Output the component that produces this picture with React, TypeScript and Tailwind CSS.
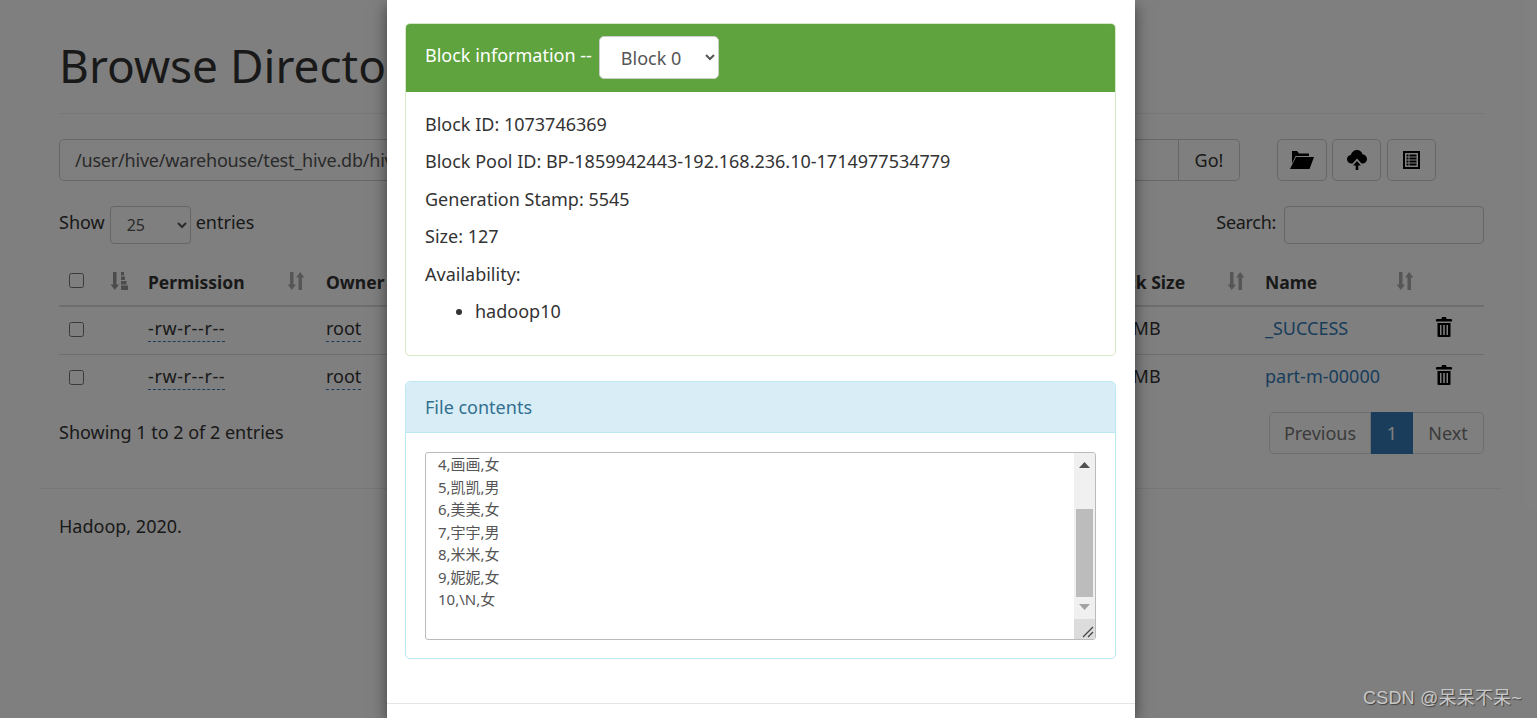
function SortBoth() {
  return (
    <svg width="18" height="20" viewBox="0 0 18 20" className="fill-[#333] opacity-40 shrink-0 -mt-[3px]">
      <path d="M3 1h3.500v12.500H9L4.800 19 .6 13.500H3z" />
      <path d="M11.500 19V6.500H9L13.200 1l4.200 5.500H15V19z" />
    </svg>
  )
}

function SortAttrs() {
  return (
    <svg width="18" height="20" viewBox="0 0 18 20" className="fill-[#333] opacity-50 shrink-0 -mt-[3px]">
      <path d="M3 1h3.500v12.500H9L4.800 19 .6 13.500H3z" />
      <path d="M11 1h3v3.500h-3zM11 5.500h4v3.500h-4zM11 10h5.500v3.500H11zM11 14.500h7V19h-7z" />
    </svg>
  )
}

function Trash() {
  return (
    <svg width="16" height="20" viewBox="0 0 16 20" className="fill-[#000]">
      <path d="M6 0h4l.6 2H15a1 1 0 0 1 1 1v1.500H0V3a1 1 0 0 1 1-1h4.400z" />
      <path fillRule="evenodd" d="M1.500 6h13v13a1 1 0 0 1-1 1h-11a1 1 0 0 1-1-1zM4 8v10h1.500V8zm3.200 0v10h1.600V8zm3.300 0v10H12V8z" />
    </svg>
  )
}

function FolderOpen() {
  return (
    <svg width="24" height="18" viewBox="0 0 24 18" className="fill-[#000]">
      <path d="M2 0h5l2 2.500h10V5H5.500L2 12.500z" />
      <path d="M6 6h18l-4.500 12H0z" />
    </svg>
  )
}

function CloudUpload() {
  return (
    <svg width="20" height="20" viewBox="0 0 20 20" className="fill-[#000]">
      <path d="M10 0c2.700 0 4.900 1.800 5.500 4.300C18 4.500 20 6.500 20 9c0 2.700-2 4.500-4.500 4.500h-1L10 8.500l-4.500 5h-1C2 13.500 0 11.700 0 9.200 0 7 1.600 5.200 3.800 5 4.500 2.100 7 0 10 0z" />
      <path d="M10 11l4 4.500h-2.700V20H8.700v-4.500H6z" />
    </svg>
  )
}

function ListAlt() {
  return (
    <svg width="17" height="18" viewBox="0 0 17 18" className="fill-[#000]">
      <path fillRule="evenodd" d="M0 0h17v18H0zM2 2v14h13V2z" />
      <path d="M3.500 3.500h2v2h-2zM6.500 3.500h7v2h-7zM3.500 6.500h2v2h-2zM6.500 6.500h7v2h-7zM3.500 9.500h2v2h-2zM6.500 9.500h7v2h-7zM3.500 12.500h2v2h-2zM6.500 12.500h7v2h-7z" />
    </svg>
  )
}

function Row({ name }: { name: string }) {
  return (
    <tr className="border-b border-[#ddd] last:border-b-0 h-[48px]">
      <td className="pl-[10px] pb-[2px]"><input type="checkbox" className="w-[15px] h-[15px] block" /></td>
      <td></td>
      <td className="pl-[10px] pb-[4px]"><span className="tracking-[0.6px] pb-[1px] border-b border-dashed border-[#337ab7]">-rw-r--r--</span></td>
      <td className="pl-[9px] pb-[4px]"><span className="pb-[1px] border-b border-dashed border-[#337ab7]">root</span></td>
      <td className="pl-[2px] pb-[4px]">128 MB</td>
      <td className="pl-[9px] pb-[4px] text-[#337ab7]">{name}</td>
      <td className="pl-[9px] pb-[6px]"><Trash /></td>
    </tr>
  )
}

export default function App() {
  return (
    <div className="relative h-[718px] overflow-hidden bg-white font-['Noto_Sans','Noto_Sans_CJK_SC',sans-serif] text-[18px] leading-[25px] text-[#333]">
      <div className="pl-[59px] pr-[53px] pt-[34px]">
        <h1 className="text-[46px] leading-[62px] text-[#333] pb-[17px] border-b border-[#eee]">Browse Directory</h1>

        <div className="flex mt-[25px] h-[42px]">
          <input defaultValue="/user/hive/warehouse/test_hive.db/hive_table" className="w-[1120px] border border-[#ccc] rounded-l-[5px] px-[15px] text-[#555] tracking-[-0.2px]" />
          <button className="w-[61px] border border-l-0 border-[#ccc] rounded-r-[5px]">Go!</button>
          <button className="w-[50px] ml-[37px] border border-[#ccc] rounded-[5px] flex items-center justify-center"><FolderOpen /></button>
          <button className="w-[49px] ml-[5px] border border-[#ccc] rounded-[5px] flex items-center justify-center"><CloudUpload /></button>
          <button className="w-[49px] ml-[6px] border border-[#ccc] rounded-[5px] flex items-center justify-center"><ListAlt /></button>
        </div>

        <div className="flex items-center justify-between mt-[25px] h-[38px]">
          <div className="flex items-center">
            <span className="-mt-[6px]">Show</span>
            <select className="w-[81px] h-[38px] mx-[5px] pl-[12px] border border-[#ccc] rounded-[4px] bg-white text-[16px] text-[#555]"><option>25</option></select>
            <span className="-mt-[6px]">entries</span>
          </div>
          <div className="flex items-center">
            <span className="-mt-[6px] tracking-[-0.3px]">Search:</span>
            <input className="w-[200px] h-[38px] ml-[8px] border border-[#ccc] rounded-[4px]" />
          </div>
        </div>

        <table className="table-fixed w-[1425px] mt-[18px]">
          <colgroup>
            <col className="w-[41px]" />
            <col className="w-[38px]" />
            <col className="w-[179px]" />
            <col className="w-[778px]" />
            <col className="w-[161px]" />
            <col className="w-[171px]" />
            <col className="w-[57px]" />
          </colgroup>
          <thead>
            <tr className="border-b-2 border-[#ddd] h-[44px] font-bold text-[17.500px]">
              <th className="pl-[10px] pb-[7px]"><input type="checkbox" className="w-[15px] h-[15px] block" /></th>
              <th className="pl-[10px] pb-[3px]"><SortAttrs /></th>
              <th className="pl-[10px] pr-[12px] pb-[3px]"><div className="flex items-center justify-between">Permission<SortBoth /></div></th>
              <th className="pl-[9px] pb-[3px] text-left">Owner</th>
              <th className="pl-[4px] pr-[11px] pb-[3px]"><div className="flex items-center justify-between">Block Size<SortBoth /></div></th>
              <th className="pl-[9px] pr-[13px] pb-[3px]"><div className="flex items-center justify-between">Name<SortBoth /></div></th>
              <th></th>
            </tr>
          </thead>
          <tbody>
            <Row name="_SUCCESS" />
            <Row name="part-m-00000" />
          </tbody>
        </table>

        <div className="flex items-start justify-between mt-[10px]">
          <div className="mt-[8px]">Showing 1 to 2 of 2 entries</div>
          <div className="flex h-[42px] text-[#777]">
            <span className="w-[102px] border border-[#ddd] rounded-l-[5px] flex items-center justify-center">Previous</span>
            <span className="w-[42px] bg-[#337ab7] text-white flex items-center justify-center">1</span>
            <span className="w-[71px] border border-l-0 border-[#ddd] rounded-r-[5px] flex items-center justify-center">Next</span>
          </div>
        </div>
      </div>

      <div className="border-t border-[#eee] mt-[34px] ml-[40px] mr-[35px] pl-[19px] pt-[25px]">Hadoop, 2020.</div>

      <div className="absolute inset-0 bg-black/50"></div>

      <div className="absolute left-[387px] top-0 h-[718px] w-[748px] bg-white shadow-[0_5px_15px_rgba(0,0,0,0.5)] px-[18px] pt-[23px]">
        <div className="w-[711px] border border-[#d6e9c6] rounded-[5px]">
          <div className="h-[68px] bg-[#5fa33e] text-white flex items-center px-[19px] rounded-t-[4px]">
            <span className="-mt-[6px]">Block information --</span>
            <select className="w-[120px] h-[43px] -mt-[1px] ml-[7px] pl-[17px] rounded-[5px] bg-white text-[#555] border border-[#ccc]"><option>Block 0</option></select>
          </div>
          <div className="px-[19px] pt-[19.500px] pb-[18.500px]">
            <p className="mb-[12.500px]">Block ID: 1073746369</p>
            <p className="mb-[12.500px]">Block Pool ID: BP-1859942443-192.168.236.10-1714977534779</p>
            <p className="mb-[12.500px]">Generation Stamp: 5545</p>
            <p className="mb-[12.500px]">Size: 127</p>
            <p className="mb-[12.500px]">Availability:</p>
            <ul className="list-disc pl-[50px] mb-[12.500px]"><li>hadoop10</li></ul>
          </div>
        </div>

        <div className="w-[711px] mt-[25px] border border-[#bce8f1] rounded-[5px]">
          <div className="h-[51px] bg-[#d9edf7] text-[#31708f] flex items-center px-[19px] rounded-t-[4px] border-b border-[#bce8f1]">File contents</div>
          <div className="px-[19px] pt-[19px] pb-[18px]">
            <div className="h-[188px] border border-[#bbb] rounded-[3px] flex overflow-hidden text-[15px] leading-[22.500px] text-[#555]">
              <div className="flex-1 pl-[12px]">
                <div>4,画画,女</div>
                <div>5,凯凯,男</div>
                <div>6,美美,女</div>
                <div>7,宇宇,男</div>
                <div>8,米米,女</div>
                <div>9,妮妮,女</div>
                <div>10,\N,女</div>
              </div>
              <div className="w-[21px] bg-[#f0f0f0] flex flex-col items-center">
                <svg width="11" height="6" viewBox="0 0 11 6" className="mt-[9px] fill-[#505050]"><path d="M5.500 0 11 6H0z" /></svg>
                <div className="w-[17px] h-[88px] mt-[41px] bg-[#bcbcbc]"></div>
                <svg width="11" height="6" viewBox="0 0 11 6" className="mt-[7px] fill-[#a3a3a3]"><path d="M0 0h11L5.500 6z" /></svg>
                <div className="mt-[9px] w-full flex-1 bg-[#dcdcdc] flex items-end justify-end">
                  <svg width="12" height="12" viewBox="0 0 12 12" className="stroke-[#444] fill-none mr-[1px] mb-[1px]"><path strokeWidth="1.300" d="M1 11 11 1M6 11l5-5" /></svg>
                </div>
              </div>
            </div>
          </div>
        </div>

        <div className="absolute left-0 right-0 top-[703px] border-t border-[#e5e5e5]"></div>
      </div>

      <div className="absolute left-[1363px] top-[686px] font-['Liberation_Sans','Noto_Sans_CJK_SC',sans-serif] text-[18px] tracking-[0.2px] text-[#c8c8c8] [text-shadow:1px_1px_1px_rgba(0,0,0,0.5)]">CSDN @呆呆不呆~</div>
    </div>
  )
}
